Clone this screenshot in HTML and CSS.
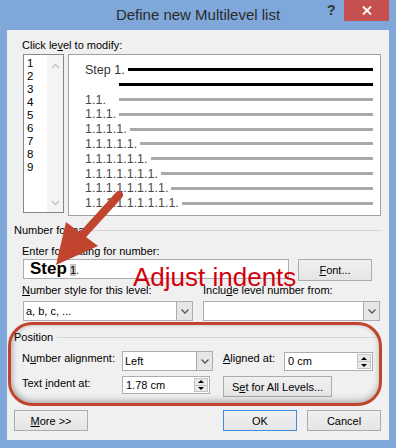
FILE: index.html
```html
<!DOCTYPE html>
<html lang="en">
<head>
  <meta charset="UTF-8">
  <meta name="viewport" content="width=device-width, initial-scale=1.0">
  <title>Define new Multilevel list</title>
  <link rel="stylesheet" href="styles.css">
</head>
<body>
  <div class="window">
    <div class="titlebar">
      <div class="tb-spacer"></div>
      <div class="tb-title">Define new Multilevel list</div>
      <div class="tb-controls">
        <span class="tb-help">?</span>
        <span class="tb-close">
          <svg width="10" height="9" viewBox="0 0 10 9"><path d="M1 0.5 L9 8.5 M9 0.5 L1 8.5" stroke="#fff" stroke-width="1.8"/></svg>
        </span>
      </div>
    </div>

    <div class="client">
      <div class="lbl lbl-click">Click le<u>v</u>el to modify:</div>

      <div class="levels-row">
        <div class="level-list">
          <ul class="level-items">
            <li>1</li><li>2</li><li>3</li><li>4</li><li>5</li><li>6</li><li>7</li><li>8</li><li>9</li>
          </ul>
          <div class="level-scroll">
            <svg width="9" height="6" viewBox="0 0 9 6"><path d="M1 5 L4.5 1.5 L8 5" fill="none" stroke="#c4c4c4" stroke-width="1.5"/></svg>
            <svg width="9" height="6" viewBox="0 0 9 6"><path d="M1 1 L4.5 4.5 L8 1" fill="none" stroke="#c4c4c4" stroke-width="1.5"/></svg>
          </div>
        </div>
        <div class="preview">
          <div class="pv-row"><span class="pv-num pv-step">Step 1.</span><span class="pv-line pv-black"></span></div>
          <div class="pv-row"><span class="pv-num"></span><span class="pv-line pv-black"></span></div>
          <div class="pv-row"><span class="pv-num">1.1.</span><span class="pv-line"></span></div>
          <div class="pv-row"><span class="pv-num">1.1.1.</span><span class="pv-line"></span></div>
          <div class="pv-row"><span class="pv-num">1.1.1.1.</span><span class="pv-line"></span></div>
          <div class="pv-row"><span class="pv-num">1.1.1.1.1.</span><span class="pv-line"></span></div>
          <div class="pv-row"><span class="pv-num">1.1.1.1.1.1.</span><span class="pv-line"></span></div>
          <div class="pv-row"><span class="pv-num">1.1.1.1.1.1.1.</span><span class="pv-line"></span></div>
          <div class="pv-row"><span class="pv-num">1.1.1.1.1.1.1.1.</span><span class="pv-line"></span></div>
          <div class="pv-row"><span class="pv-num">1.1.1.1.1.1.1.1.1.</span><span class="pv-line"></span></div>
        </div>
      </div>

      <div class="group-head group-format"><span>Number format</span><span class="group-rule"></span></div>

      <div class="lbl lbl-enter">Enter formatting for number:</div>
      <div class="format-row">
        <div class="format-box"><b>Step</b> <span class="hl">1</span>.</div>
        <button class="btn btn-font"><u>F</u>ont...</button>
      </div>

      <div class="pair-labels">
        <div class="lbl lbl-style"><u>N</u>umber style for this level:</div>
        <div class="lbl lbl-include">Inclu<u>d</u>e level number from:</div>
      </div>
      <div class="pair-combos">
        <div class="combo combo-style">
          <span class="combo-text">a, b, c, ...</span>
          <span class="combo-btn"><svg width="8" height="5" viewBox="0 0 8 5"><path d="M0.5 0.5 L4 4 L7.5 0.5" fill="none" stroke="#555" stroke-width="1.3"/></svg></span>
        </div>
        <div class="combo combo-include">
          <span class="combo-text"></span>
          <span class="combo-btn"><svg width="8" height="5" viewBox="0 0 8 5"><path d="M0.5 0.5 L4 4 L7.5 0.5" fill="none" stroke="#555" stroke-width="1.3"/></svg></span>
        </div>
      </div>

      <div class="group-head group-position"><span>Position</span><span class="group-rule"></span></div>

      <div class="pos-grid">
        <div class="lbl">N<u>u</u>mber alignment:</div>
        <div class="combo combo-align">
          <span class="combo-text">Left</span>
          <span class="combo-btn"><svg width="8" height="5" viewBox="0 0 8 5"><path d="M0.5 0.5 L4 4 L7.5 0.5" fill="none" stroke="#555" stroke-width="1.3"/></svg></span>
        </div>
        <div class="lbl"><u>A</u>ligned at:</div>
        <div class="spin spin-aligned">
          <span class="spin-text">0 cm</span>
          <span class="spin-btns"><span class="spin-up"></span><span class="spin-down"></span></span>
        </div>

        <div class="lbl">Text <u>i</u>ndent at:</div>
        <div class="spin spin-indent">
          <span class="spin-text">1.78 cm</span>
          <span class="spin-btns"><span class="spin-up"></span><span class="spin-down"></span></span>
        </div>
        <button class="btn btn-all">S<u>e</u>t for All Levels...</button>
      </div>

      <div class="footer">
        <button class="btn btn-more"><u>M</u>ore &gt;&gt;</button>
        <button class="btn btn-ok">OK</button>
        <button class="btn btn-cancel">Cancel</button>
      </div>
    </div>

    <!-- annotations drawn over the dialog -->
    <div class="annot-ring"></div>
    <div class="annot-text">Adjust indents</div>
    <svg class="annot-arrow" width="396" height="448" viewBox="0 0 396 448">
      <path d="M119 195 L78 240" stroke="#c1452e" stroke-width="8" stroke-linecap="round"/>
      <polygon points="56,265 66,222 98,246" fill="#c1452e"/>
    </svg>
  </div>
</body>
</html>
```

FILE: styles.css
```css
* {
  box-sizing: border-box;
}
body {
  margin: 0;
  background: #ffffff;
  font-family: 'Liberation Sans', Arial, sans-serif;
}
.window {
  position: relative;
  width: 396px;
  height: 448px;
  background: #7fa7d9;
  overflow: hidden;
}
.titlebar {
  height: 30px;
  display: flex;
  align-items: flex-start;
}
.tb-spacer {
  width: 76px;
}
.tb-title {
  flex: 1;
  text-align: center;
  font-size: 15px;
  line-height: 30px;
  color: #2b2b2b;
}
.tb-controls {
  width: 76px;
  display: flex;
  gap: 7px;
  padding-left: 7px;
}
.tb-help {
  width: 10px;
  font-size: 14px;
  font-weight: bold;
  line-height: 21px;
  color: #333333;
}
.tb-close {
  width: 45px;
  height: 21px;
  background: #c75050;
  display: flex;
  align-items: center;
  justify-content: center;
}
.client {
  margin: 0 7px;
  height: 410px;
  background: #f0f0f0;
  font-size: 11px;
  color: #000000;
  overflow: hidden;
}
.lbl {
  line-height: 14px;
  height: 14px;
  white-space: nowrap;
}
.lbl-click {
  margin: 8px 0 0 15px;
}

/* level list + preview */
.levels-row {
  display: flex;
  align-items: flex-start;
  margin: 2px 0 0 16px;
}
.level-list {
  width: 41px;
  height: 159px;
  border: 1px solid #828790;
  background: #ffffff;
  display: flex;
}
.level-items {
  list-style: none;
  margin: 0;
  padding: 2px 0 0 3px;
  width: 23px;
  font-size: 11.5px;
  line-height: 13px;
}
.level-scroll {
  flex: 1;
  background: #f4f4f4;
  display: flex;
  flex-direction: column;
  justify-content: space-between;
  align-items: center;
  padding: 8px 0 6px;
}
.preview {
  width: 313px;
  height: 162px;
  margin-left: 4px;
  border: 1px solid #a0a0a0;
  background: #ffffff;
  padding: 7.6px 7px 0 16px;
}
.pv-row {
  height: 14.8px;
  display: flex;
  align-items: center;
}
.pv-num {
  min-width: 31px;
  margin-right: 3px;
  font-size: 12.5px;
  color: #4a4a4a;
  white-space: nowrap;
}
.pv-step {
  color: #333333;
}
.pv-line {
  flex: 1;
  height: 3px;
  background: #a9a9a9;
}
.pv-black {
  background: #000000;
}

/* group headers */
.group-head {
  display: flex;
  align-items: center;
  line-height: 14px;
  height: 14px;
  margin-left: 7px;
}
.group-rule {
  flex: 1;
  height: 1px;
  background: #d5d5d5;
  margin-left: 4px;
}
.group-format {
  margin-top: 7px;
  margin-right: 8px;
}
.group-position {
  margin-top: 9px;
  margin-right: 11px;
}
.lbl-enter {
  margin: 7px 0 0 15px;
}

/* formatting row */
.format-row {
  display: flex;
  align-items: flex-start;
  margin: 1px 0 0 16px;
}
.format-box {
  width: 266px;
  height: 20px;
  border: 1px solid #abadb3;
  background: #ffffff;
  padding-left: 6px;
  line-height: 18px;
  white-space: nowrap;
}
.format-box b {
  font-size: 17px;
}
.hl {
  background: #c6c6c6;
}
.btn {
  height: 21px;
  width: 74px;
  padding: 0;
  border: 1px solid #acacac;
  background: linear-gradient(#f0f0f0, #e5e5e5);
  font-family: 'Liberation Sans', Arial, sans-serif;
  font-size: 11px;
  color: #000000;
}
.btn-font {
  height: 22px;
  margin-left: 9px;
}

/* style / include */
.pair-labels {
  display: flex;
  margin: 2px 0 0 15px;
}
.lbl-style {
  width: 181px;
}
.pair-combos {
  display: flex;
  gap: 10px;
  margin: 4px 0 0 16px;
}
.combo {
  display: flex;
  height: 20px;
  border: 1px solid #abadb3;
  background: #ffffff;
}
.combo-style {
  width: 170px;
}
.combo-include {
  width: 177px;
}
.combo-text {
  flex: 1;
  padding-left: 2px;
  line-height: 18px;
  white-space: nowrap;
}
.combo-btn {
  width: 16px;
  border-left: 1px solid #acacac;
  background: #e6e6e6;
  display: flex;
  align-items: center;
  justify-content: center;
}

/* position group */
.pos-grid {
  display: grid;
  grid-template-columns: 100px 101px 61px 96px;
  grid-template-rows: 20px 21px;
  row-gap: 5px;
  align-items: start;
  margin: 7px 0 0 15px;
}
.combo-align {
  width: 91px;
}
.spin {
  display: flex;
  width: 89px;
  height: 19px;
  border: 1px solid #abadb3;
  background: #ffffff;
}
.spin-aligned {
  margin-top: 1px;
}
.spin-indent {
  width: 88px;
  height: 18px;
}
.spin-text {
  flex: 1;
  padding-left: 3px;
  line-height: 17px;
  white-space: nowrap;
}
.spin-btns {
  width: 14px;
  margin: 1px;
  display: flex;
  flex-direction: column;
  background: #eaeaea;
  border: 1px solid #c4c4c4;
}
.spin-up,
.spin-down {
  flex: 1;
  display: flex;
  align-items: center;
  justify-content: center;
}
.spin-up {
  border-bottom: 1px solid #c4c4c4;
}
.spin-up::after {
  content: "";
  border-left: 3px solid transparent;
  border-right: 3px solid transparent;
  border-bottom: 3px solid #000000;
}
.spin-down::after {
  content: "";
  border-left: 3px solid transparent;
  border-right: 3px solid transparent;
  border-top: 3px solid #000000;
}
.btn-all {
  grid-column: 3 / span 2;
  width: 109px;
}

/* footer */
.footer {
  display: flex;
  margin: 13px 0 0 7px;
}
.btn-ok {
  margin-left: 135px;
  border-color: #3d8ee0;
}
.btn-cancel {
  margin-left: 10px;
}

/* annotations */
.annot-ring {
  position: absolute;
  left: 8px;
  top: 322px;
  width: 374px;
  height: 84px;
  border: 3px solid #c1452e;
  border-radius: 24px;
  box-shadow: inset 0 -3px 6px rgba(0, 0, 0, 0.22), inset 2px 0 5px rgba(0, 0, 0, 0.12);
  pointer-events: none;
}
.annot-text {
  position: absolute;
  left: 133px;
  top: 264px;
  font-size: 26px;
  line-height: 26px;
  color: #d2000c;
  white-space: nowrap;
}
.annot-arrow {
  position: absolute;
  left: 0;
  top: 0;
  pointer-events: none;
}
```
